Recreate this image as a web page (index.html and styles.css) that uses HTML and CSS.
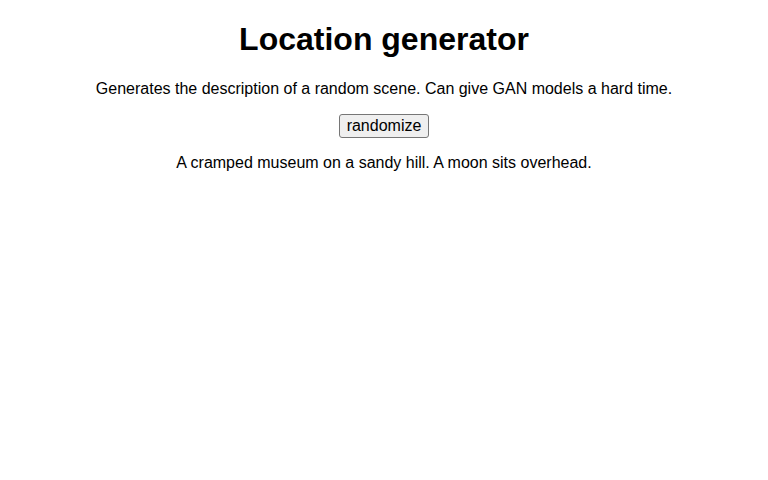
FILE: index.html
```html
<!DOCTYPE html>
<html>
<head>
<meta charset="utf-8">
<title>Location generator</title>
<link rel="stylesheet" href="styles.css">
</head>
<body>
<main class="page">
  <h1 class="title">Location generator</h1>
  <p class="intro">Generates the description of a random scene. Can give GAN models a hard time.</p>
  <button class="randomize" type="button">randomize</button>
  <p class="scene">A cramped museum on a sandy hill. A moon sits overhead.</p>
</main>
</body>
</html>
```
FILE: styles.css
```css
body {
  margin: 0 8px;
  font-family: "Liberation Sans", Arial, sans-serif;
  color: #000;
  background: #fff;
}

.page {
  text-align: center;
}

.title {
  font-size: 32px;
  font-weight: bold;
  margin: 21.44px 0;
}

.intro,
.scene {
  font-size: 16px;
  margin: 16px 0;
}

.randomize {
  font-family: "Liberation Sans", Arial, sans-serif;
  font-size: 16px;
  line-height: 18px;
  color: #000;
  background: #efefef;
  border: 1px solid #767676;
  border-radius: 3px;
  padding: 2px 7px;
}
```
